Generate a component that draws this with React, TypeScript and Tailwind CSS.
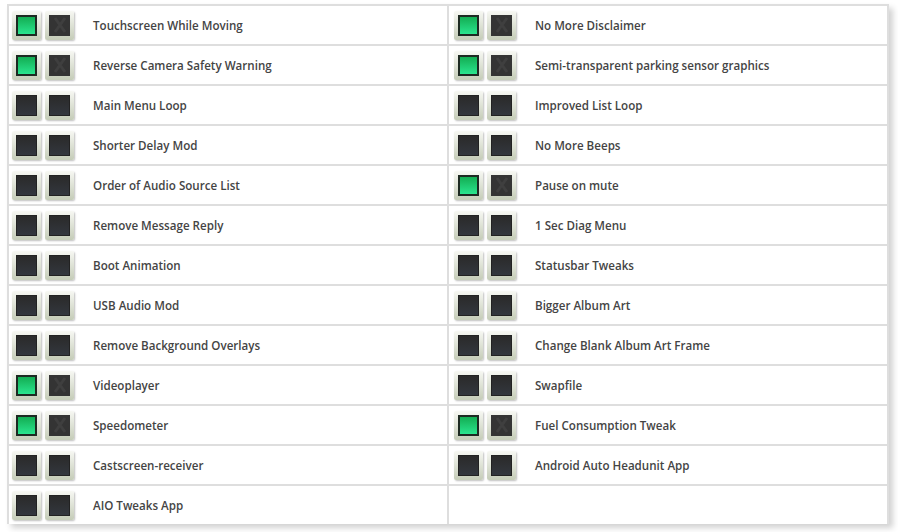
import React from "react";

type Mod = { name: string; on: boolean } | null;

const left: Mod[] = [
  { name: "Touchscreen While Moving", on: true },
  { name: "Reverse Camera Safety Warning", on: true },
  { name: "Main Menu Loop", on: false },
  { name: "Shorter Delay Mod", on: false },
  { name: "Order of Audio Source List", on: false },
  { name: "Remove Message Reply", on: false },
  { name: "Boot Animation", on: false },
  { name: "USB Audio Mod", on: false },
  { name: "Remove Background Overlays", on: false },
  { name: "Videoplayer", on: true },
  { name: "Speedometer", on: true },
  { name: "Castscreen-receiver", on: false },
  { name: "AIO Tweaks App", on: false },
];

const right: Mod[] = [
  { name: "No More Disclaimer", on: true },
  { name: "Semi-transparent parking sensor graphics", on: true },
  { name: "Improved List Loop", on: false },
  { name: "No More Beeps", on: false },
  { name: "Pause on mute", on: true },
  { name: "1 Sec Diag Menu", on: false },
  { name: "Statusbar Tweaks", on: false },
  { name: "Bigger Album Art", on: false },
  { name: "Change Blank Album Art Frame", on: false },
  { name: "Swapfile", on: false },
  { name: "Fuel Consumption Tweak", on: true },
  { name: "Android Auto Headunit App", on: false },
  null,
];

const Btn: React.FC<{ kind: "green" | "dark" | "x" }> = ({ kind }) => (
  <div className="w-[29px] h-[29px] p-[4px] rounded-[2px] bg-gradient-to-b from-[#f7f8f3] to-[#c5ccb8] shadow-[1px_1px_2px_rgba(0,0,0,0.25)]">
    {kind === "green" && (
      <div className="w-full h-full border-2 border-[#1d2a22] bg-gradient-to-b from-[#13ad52] to-[#2ae58e]" />
    )}
    {kind === "dark" && (
      <div className="w-full h-full border border-[#222] bg-gradient-to-b from-[#2a2a2a] to-[#33373e]" />
    )}
    {kind === "x" && (
      <div className="w-full h-full bg-[#343434] flex items-center justify-center">
        <svg width="16" height="18" viewBox="0 0 16 18">
          <path d="M3 2 L13 16 M13 2 L3 16" stroke="#3f3f3f" strokeWidth="3" />
        </svg>
      </div>
    )}
  </div>
);

const Cell: React.FC<{ mod: Mod; last: boolean; right?: boolean }> = ({ mod, last, right }) => (
  <div
    className={`flex items-center ${right ? "pl-[5px]" : "pl-[3px]"} ${last ? "h-[38px]" : "h-[40px] border-b-2 border-[#dedede]"}`}
  >
    {mod && (
      <>
        <div className="flex gap-[4px]">
          <Btn kind={mod.on ? "green" : "dark"} />
          <Btn kind={mod.on ? "x" : "dark"} />
        </div>
        <span className="ml-[19px] pt-[2px] text-[11.6px] font-semibold text-[#444] font-['Open_Sans',sans-serif]">
          {mod.name}
        </span>
      </>
    )}
  </div>
);

export default function App() {
  return (
    <div className="w-[898px] h-[532px] bg-white pt-[4px] pl-[7px]">
      <div className="w-[882px] grid grid-cols-2 bg-white border-t-2 border-l-2 border-[#dedede] shadow-[4px_4px_6px_rgba(0,0,0,0.18)]">
        <div className="border-r-2 border-[#dedede]">
          {left.map((m, i) => (
            <Cell key={i} mod={m} last={i === left.length - 1} />
          ))}
        </div>
        <div className="border-r-2 border-[#dedede]">
          {right.map((m, i) => (
            <Cell key={i} mod={m} last={i === right.length - 1} right />
          ))}
        </div>
      </div>
    </div>
  );
}
